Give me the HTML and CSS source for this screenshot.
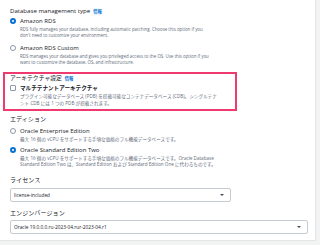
FILE: index.html
```html
<!DOCTYPE html>
<html lang="ja">
<head>
<meta charset="utf-8">
<link rel="stylesheet" href="styles.css">
</head>
<body>
<div class="panel">
  <div class="field-label first">Database management type <span class="info">情報</span></div>
  <div class="option o1">
    <span class="radio on"></span>
    <div class="opt-body">
      <div class="opt-title">Amazon RDS</div>
      <div class="desc">RDS fully manages your database, including automatic patching. Choose this option if you<br>don't need to customize your environment.</div>
    </div>
  </div>
  <div class="option o2">
    <span class="radio"></span>
    <div class="opt-body">
      <div class="opt-title">Amazon RDS Custom</div>
      <div class="desc">RDS manages your database and gives you privileged access to the OS. Use this option if you<br>want to customize the database, OS, and infrastructure.</div>
    </div>
  </div>

  <div class="highlight">
    <div class="field-label jp">アーキテクチャ設定 <span class="info">情報</span></div>
    <div class="option check-opt">
      <span class="checkbox"></span>
      <div class="opt-body">
        <div class="opt-title bold">マルチテナントアーキテクチャ</div>
        <div class="desc jpdesc">プラグイン可能なデータベース (PDB) を搭載可能なコンテナデータベース (CDB)。シングルテナ<br>ント CDB には 1 つの PDB が搭載されます。</div>
      </div>
    </div>
  </div>

  <div class="field-label s-edition">エディション</div>
  <div class="option o3">
    <span class="radio"></span>
    <div class="opt-body">
      <div class="opt-title">Oracle Enterprise Edition</div>
      <div class="desc jp">最大 16 個の vCPU をサポートする手頃な価格のフル機能データベースです。</div>
    </div>
  </div>
  <div class="option o4">
    <span class="radio on"></span>
    <div class="opt-body">
      <div class="opt-title">Oracle Standard Edition Two</div>
      <div class="desc jp">最大 16 個の vCPU をサポートする手頃な価格のフル機能データベースです。Oracle Database<br>Standard Edition Two は、Standard Edition および Standard Edition One に代わるものです。</div>
    </div>
  </div>

  <div class="field-label s-license">ライセンス</div>
  <div class="select short s1"><span>license-included</span><span class="caret"></span></div>

  <div class="field-label s-engine">エンジンバージョン</div>
  <div class="select long s2"><span>Oracle 19.0.0.0.ru-2023-04.rur-2023-04.r1</span><span class="caret"></span></div>
</div>
</body>
</html>
```

FILE: styles.css
```css
html, body {
  margin: 0;
  padding: 0;
}
body {
  width: 320px;
  height: 245px;
  overflow: hidden;
  background: #f2f3f3;
  font-family: "Open Sans", "Noto Sans CJK JP", sans-serif;
  color: #16191f;
}
.panel {
  box-sizing: border-box;
  width: 316px;
  height: 241px;
  background: #ffffff;
  border-right: 1px solid #e3e5e7;
  border-bottom: 1px solid #e3e5e7;
  padding: 0 0 0 10px;
  display: flex;
  flex-direction: column;
}
.field-label {
  font-size: 6.1px;
  line-height: 8px;
  height: 8px;
  color: #16191f;
  white-space: nowrap;
}
.field-label.jp {
  font-size: 5.8px;
}
.field-label.first {
  margin-top: 6.5px;
}
.info {
  color: #0972d3;
  font-weight: 700;
  font-size: 4.3px;
  margin-left: 1.5px;
}
.option {
  display: flex;
  align-items: flex-start;
}
.o1 { margin-top: 2.5px; }
.o2 { margin-top: 6px; }
.o3 { margin-top: 4px; }
.o4 { margin-top: 4.5px; }
.radio {
  flex: none;
  box-sizing: border-box;
  width: 6px;
  height: 6px;
  border-radius: 50%;
  border: 1px solid #8d99a8;
  margin-top: 1px;
  margin-right: 4px;
  background: #fff;
}
.radio.on {
  border: 2px solid #0972d3;
}
.checkbox {
  flex: none;
  box-sizing: border-box;
  width: 6px;
  height: 6px;
  border-radius: 1px;
  border: 1px solid #8d99a8;
  margin-top: 1px;
  margin-right: 4px;
}
.opt-title {
  font-size: 6px;
  line-height: 8px;
  color: #16191f;
}
.opt-title.bold {
  font-weight: 700;
  font-size: 5.6px;
}
.desc {
  font-size: 4.4px;
  line-height: 6px;
  margin-top: 0.8px;
  color: #5f6b7a;
  white-space: nowrap;
}
.desc.jp {
  font-size: 4.6px;
}
.desc.jpdesc {
  font-size: 4.6px;
  line-height: 7px;
}
.highlight {
  margin: 7.5px 0 0 -7px;
  width: 234px;
  box-sizing: border-box;
  height: 39px;
  border: 2px solid #ef3a6f;
  padding: 0 0 0 5px;
  flex: none;
}
.check-opt {
  margin-top: 2px;
}
.s-edition { margin-top: 4px; }
.s-license { margin-top: 8.5px; }
.s-engine { margin-top: 7px; }
.select {
  box-sizing: border-box;
  height: 14px;
  flex: none;
  border: 1px solid #c6cbd1;
  border-radius: 2px;
  display: flex;
  align-items: center;
  justify-content: space-between;
  padding: 0 6px 0 3px;
  font-size: 4.8px;
  color: #16191f;
}
.s1 { margin-top: 4px; }
.s2 { margin-top: 3px; }
.select.short {
  width: 221px;
}
.select.long {
  width: 298px;
}
.caret {
  width: 0;
  height: 0;
  border-left: 2px solid transparent;
  border-right: 2px solid transparent;
  border-top: 2.5px solid #414d5c;
}
```
